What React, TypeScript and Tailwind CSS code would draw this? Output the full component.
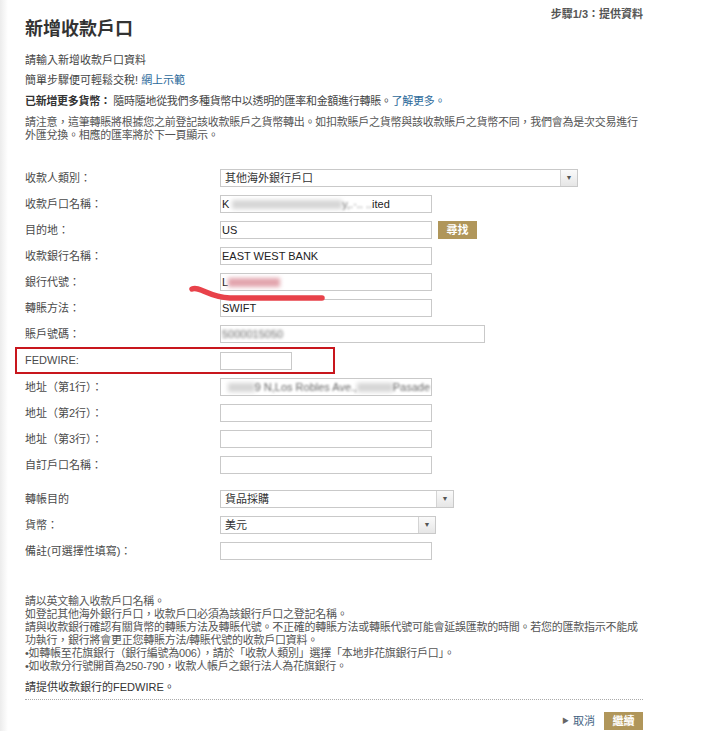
import React from 'react';

const font = { fontFamily: '"Liberation Sans", "Noto Sans CJK TC", sans-serif' };

function TextInput({ w = 'w-[212px]', children }: { w?: string; children?: React.ReactNode }) {
  return (
    <div className={`${w} h-[18px] border border-[#c9c9c9] bg-white flex items-center px-[1px] text-[11px] text-[#222] overflow-hidden whitespace-nowrap`}>
      {children}
    </div>
  );
}

function Select({ w, value }: { w: string; value: string }) {
  return (
    <div className={`${w} h-[18px] border border-[#c9c9c9] bg-white flex items-stretch text-[11px] text-[#333]`}>
      <div className="flex-1 flex items-center px-[4px]">{value}</div>
      <div className="w-[17px] border-l border-[#d4d4d4] bg-gradient-to-b from-[#fafafa] to-[#e6e6e6] flex items-center justify-center text-[7px] text-[#555]">
        ▼
      </div>
    </div>
  );
}

function Row({ label, children }: { label: string; children: React.ReactNode }) {
  return (
    <div className="h-[26px] flex items-center">
      <div className="w-[195px] text-[11px] text-[#4a4a4a]">{label}</div>
      {children}
    </div>
  );
}

export default function App() {
  return (
    <div className="w-[720px] h-[731px] bg-white flex overflow-hidden" style={font}>
      {/* left shade */}
      <div className="w-[8px] bg-gradient-to-r from-[#ececec] to-white" />

      <div className="relative w-[635px] pl-[17px]">
        {/* Header */}
        <div className="flex justify-between items-start pt-[6px]">
          <h1 className="mt-[9px] text-[18px] leading-[28px] font-bold text-[#333]">新增收款戶口</h1>
          <p className="text-[11px] leading-[16px] font-bold text-[#555]">步驟1/3：提供資料</p>
        </div>

        <p className="mt-[7px] text-[11px] leading-[20px] text-[#444]">請輸入新增收款戶口資料</p>
        <p className="text-[11px] leading-[20px] text-[#444]">
          簡單步驟便可輕鬆交稅! <span className="text-[#2c6a9a]">網上示範</span>
        </p>
        <p className="mt-[1px] text-[11px] leading-[20px] text-[#444] tracking-[-0.3px]">
          <span className="font-bold text-[#333]">已新增更多貨幣：</span> 隨時隨地從我們多種貨幣中以透明的匯率和金額進行轉賬。
          <span className="text-[#2c6a9a]">了解更多。</span>
        </p>
        <p className="mt-[5px] text-[11px] leading-[13px] text-[#555] tracking-[-0.25px]">
          請注意，這筆轉賬將根據您之前登記該收款賬戶之貨幣轉出。如扣款賬戶之貨幣與該收款賬戶之貨幣不同，我們會為是次交易進行外匯兌換。相應的匯率將於下一頁顯示。
        </p>

        {/* Form */}
        <div className="relative mt-[23px]">
          <Row label="收款人類別：">
            <Select w="w-[358px]" value="其他海外銀行戶口" />
          </Row>
          <Row label="收款戶口名稱：">
            <TextInput>
              K<span className="ml-[3px] inline-block w-[110px] h-[9px] bg-[#d6d6d6] blur-[2px]" />
              <span className="text-[#777] blur-[0.8px]">y,.·.. ..</span>ited
            </TextInput>
          </Row>
          <Row label="目的地：">
            <TextInput>US</TextInput>
            <button className="ml-[6px] w-[39px] h-[18px] bg-[#b0965a] text-white text-[11px] font-bold">尋找</button>
          </Row>
          <Row label="收款銀行名稱：">
            <TextInput>EAST WEST BANK</TextInput>
          </Row>
          <Row label="銀行代號：">
            <TextInput>
              L<span className="inline-block w-[52px] h-[9px] bg-[#e2a4ad] blur-[2px]" />
            </TextInput>
          </Row>
          <Row label="轉賬方法：">
            <TextInput>SWIFT</TextInput>
          </Row>
          <Row label="賬戶號碼：">
            <TextInput w="w-[265px]">
              <span className="text-[#666] blur-[1.4px]">5000015050</span>
            </TextInput>
          </Row>
          <div className="-ml-[10px] w-[320px] h-[27px] border-2 border-[#c8161d] pl-[8px] flex items-center">
            <div className="w-[195px] text-[11px] text-[#4a4a4a]">FEDWIRE:</div>
            <TextInput w="w-[72px]" />
          </div>
          <Row label="地址（第1行）：">
            <TextInput>
              <span className="ml-[6px] inline-block w-[30px] h-[9px] bg-[#d6d6d6] blur-[2px]" />
              <span className="text-[#666] blur-[1px]">9 N,Los Robles Ave.,</span>
              <span className="inline-block w-[40px] h-[9px] bg-[#d6d6d6] blur-[2px]" />
              <span className="text-[#666] blur-[1px]">Pasade</span>
            </TextInput>
          </Row>
          <Row label="地址（第2行）：">
            <TextInput />
          </Row>
          <Row label="地址（第3行）：">
            <TextInput />
          </Row>
          <Row label="自訂戶口名稱：">
            <TextInput />
          </Row>

          <div className="mt-[8px]">
            <Row label="轉帳目的">
              <Select w="w-[234px]" value="貨品採購" />
            </Row>
            <Row label="貨幣：">
              <Select w="w-[216px]" value="美元" />
            </Row>
            <Row label="備註(可選擇性填寫)：">
              <TextInput />
            </Row>
          </div>

          {/* hand-drawn red mark */}
          <svg className="absolute left-[163px] top-[118px]" width="150" height="24" viewBox="0 0 150 24">
            <path d="M4 6 C 12 3, 20 14, 42 15 L 134 15" fill="none" stroke="#e8424a" strokeWidth="5.5" strokeLinecap="round" />
          </svg>
        </div>

        {/* Notes */}
        <div className="mt-[31px] text-[11px] leading-[13px] text-[#555] tracking-[-0.25px]">
          <p>請以英文輸入收款戶口名稱。</p>
          <p>如登記其他海外銀行戶口，收款戶口必須為該銀行戶口之登記名稱。</p>
          <p>請與收款銀行確認有關貨幣的轉賬方法及轉賬代號。不正確的轉賬方法或轉賬代號可能會延誤匯款的時間。若您的匯款指示不能成功執行，銀行將會更正您轉賬方法/轉賬代號的收款戶口資料。</p>
          <p>•如轉帳至花旗銀行（銀行編號為006），請於「收款人類別」選擇「本地非花旗銀行戶口」。</p>
          <p>•如收款分行號開首為250-790，收款人帳戶之銀行法人為花旗銀行。</p>
        </div>
        <p className="mt-[7px] text-[11px] leading-[14px] text-[#333]">請提供收款銀行的FEDWIRE。</p>

        <div className="mt-[5px] border-t border-dotted border-[#aaa]" />

        <div className="mt-[12px] flex justify-end items-center gap-[9px]">
          <span className="text-[11px] text-[#3f5f82] flex items-center gap-[4px]">
            <span className="text-[7px] text-[#666]">▶</span>取消
          </span>
          <button className="w-[39px] h-[18px] bg-[#b0965a] text-white text-[11px] font-bold">繼續</button>
        </div>
      </div>
    </div>
  );
}
